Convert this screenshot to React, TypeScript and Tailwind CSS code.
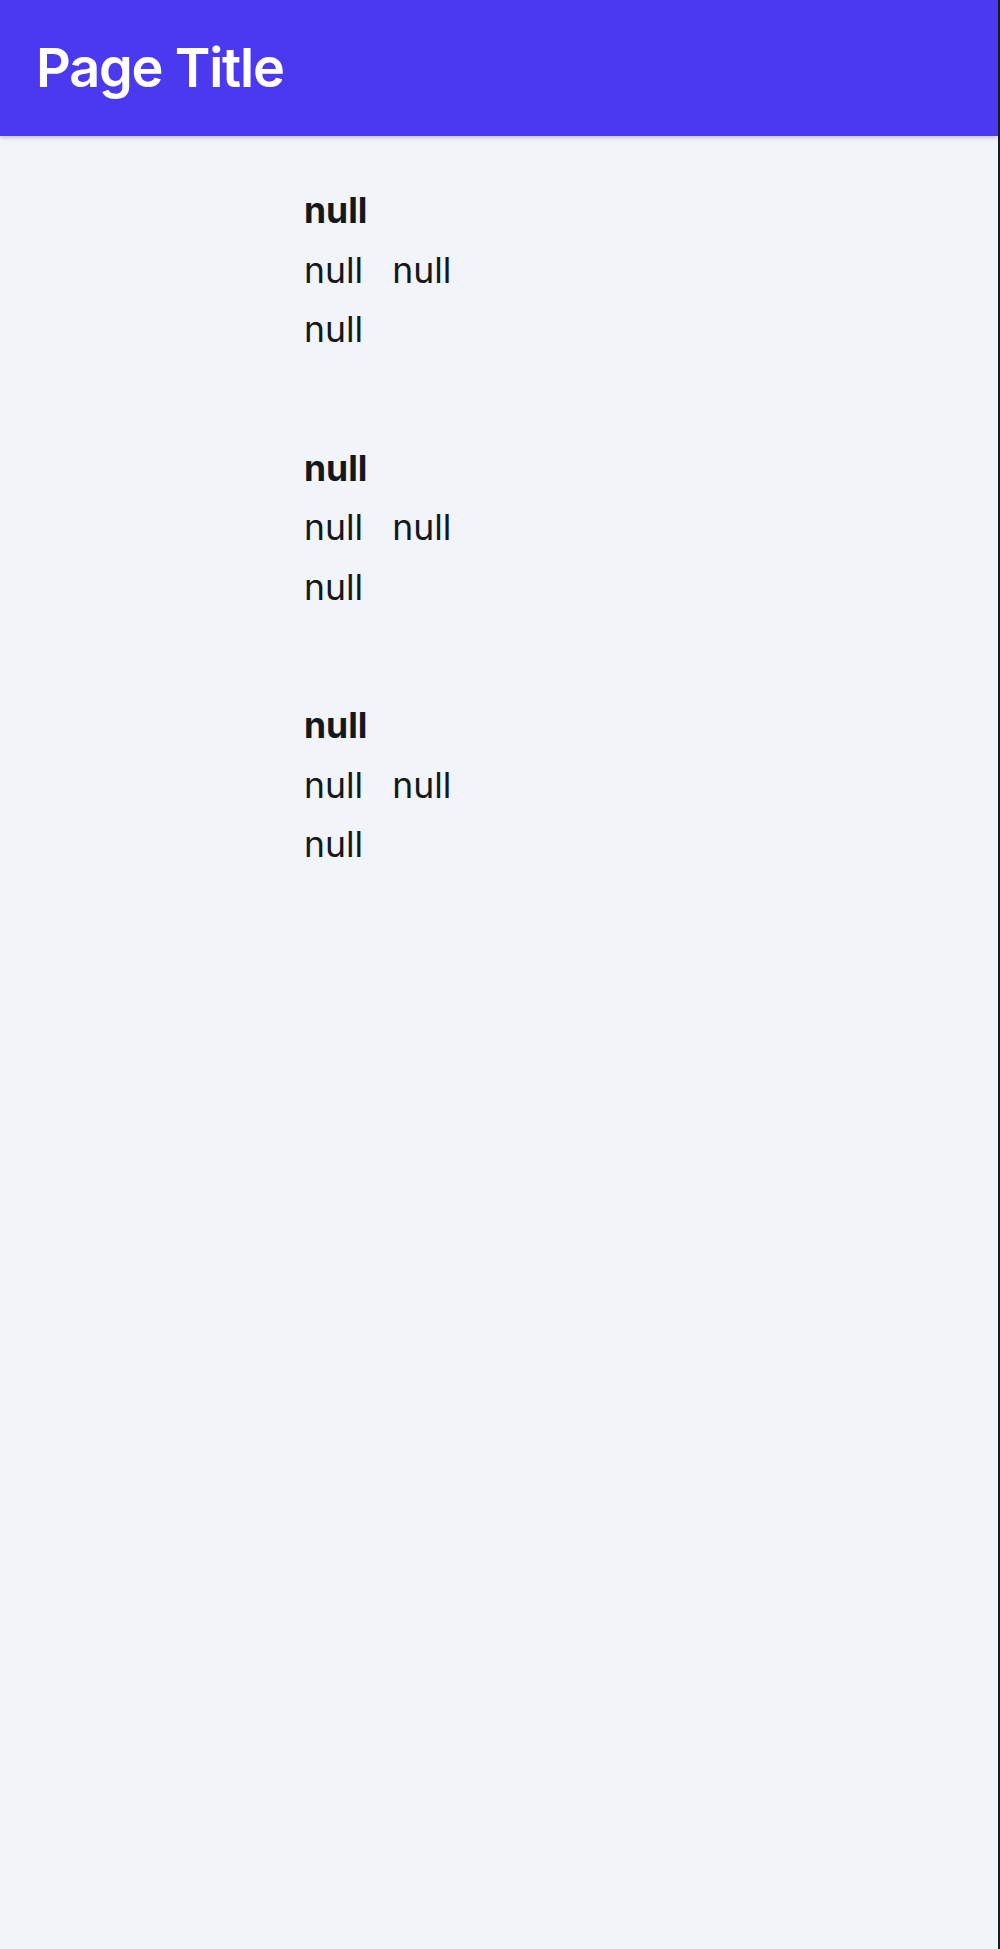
const sections = [
  { title: null, left: null, right: null, bottom: null },
  { title: null, left: null, right: null, bottom: null },
  { title: null, left: null, right: null, bottom: null },
];

function show(value: string | null) {
  return String(value);
}

export default function App() {
  return (
    <div className="min-h-[1949px] w-full bg-[#F1F4F8] border-r-2 border-[#1c1c1c] font-['Inter','Noto_Sans',sans-serif] text-[#14181B]">
      <header className="h-[136px] bg-[#4B39EF] flex items-center pl-[36px] shadow-[0_2px_4px_rgba(0,0,0,0.18)] relative z-10">
        <h1 className="text-[54px] font-semibold tracking-[-1.2px] text-white leading-none">Page Title</h1>
      </header>
      <main className="pt-[45px] pl-[304px] flex flex-col gap-[79px]">
        {sections.map((s, i) => (
          <div key={i} className="flex flex-col text-[35.5px] leading-[59.5px]">
            <div className="font-bold">{show(s.title)}</div>
            <div className="flex gap-[29px]">
              <span>{show(s.left)}</span>
              <span>{show(s.right)}</span>
            </div>
            <div>{show(s.bottom)}</div>
          </div>
        ))}
      </main>
    </div>
  );
}
